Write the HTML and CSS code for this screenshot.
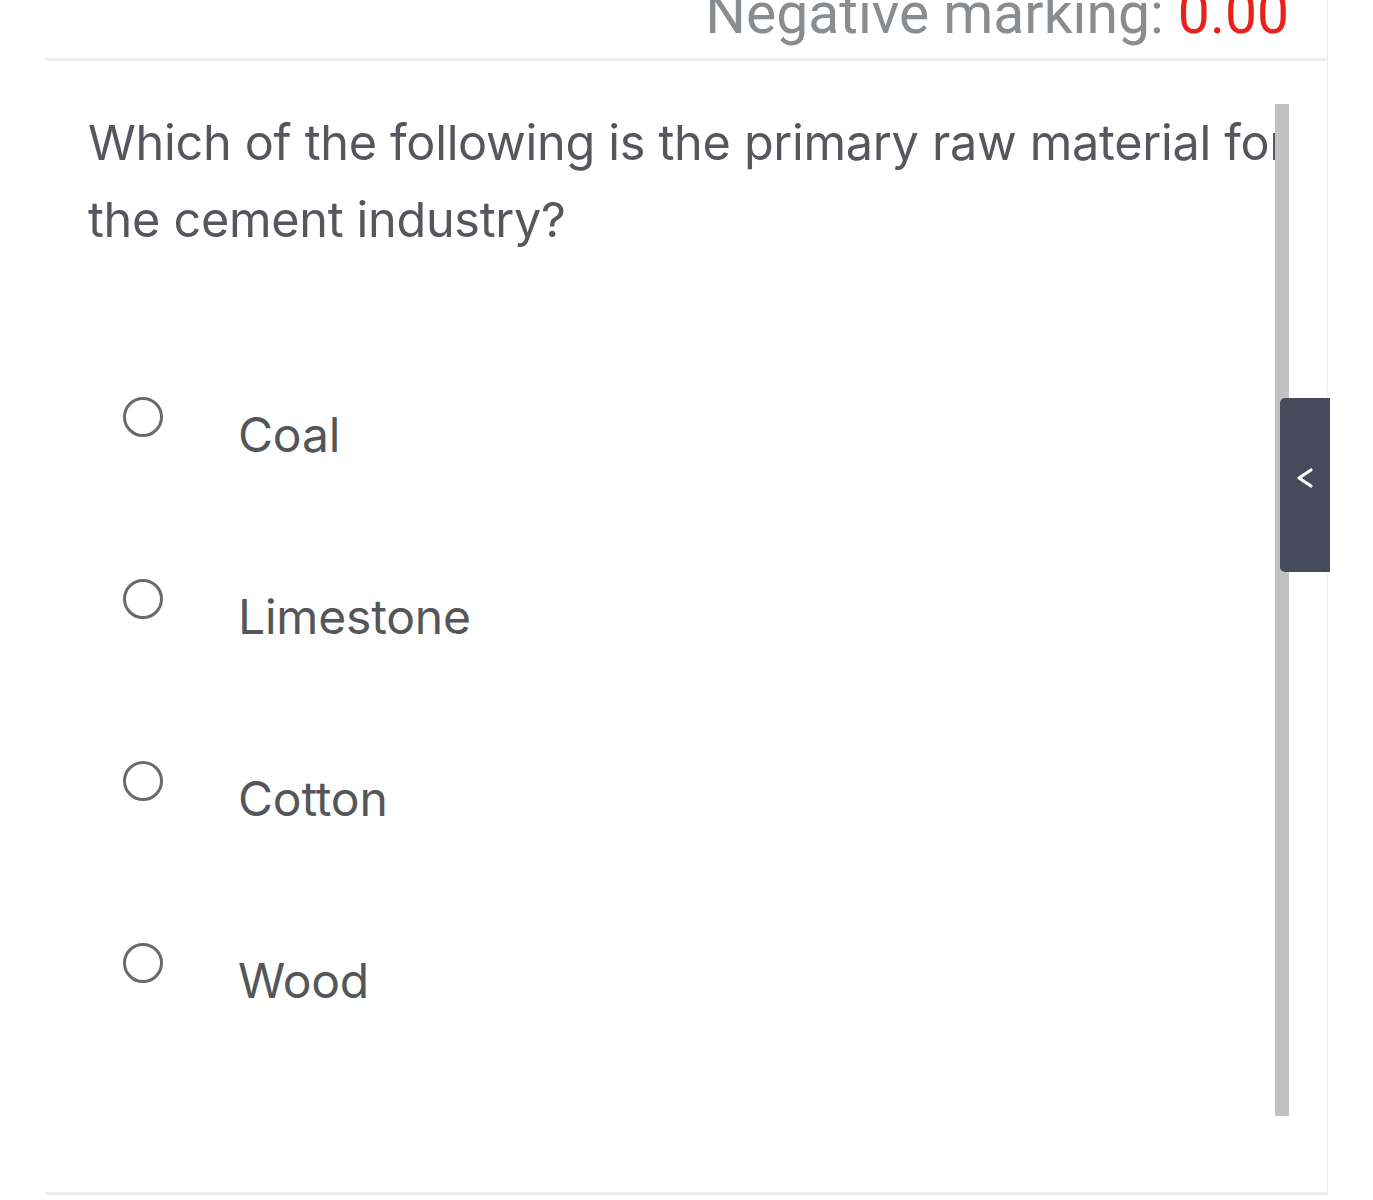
FILE: index.html
```html
<!DOCTYPE html>
<html>
<head>
<meta charset="utf-8">
<link rel="stylesheet" href="styles.css">
</head>
<body>
<div class="card">
  <div class="header">
    <span class="neg">Negative marking: <span class="neg-val">0.00</span></span>
  </div>
  <div class="content">
    <p class="question">Which of the following is the primary raw material for the cement industry?</p>
    <ul class="options">
      <li class="option"><span class="radio"></span><span class="label">Coal</span></li>
      <li class="option"><span class="radio"></span><span class="label">Limestone</span></li>
      <li class="option"><span class="radio"></span><span class="label">Cotton</span></li>
      <li class="option"><span class="radio"></span><span class="label">Wood</span></li>
    </ul>
    <div class="scrollbar"></div>
    <button class="tab" aria-label="Open panel">
      <svg class="chev" width="20" height="22" viewBox="0 0 20 22"><path d="M16 3 L4 11 L16 19" fill="none" stroke="#fff" stroke-width="3.2" stroke-linecap="round" stroke-linejoin="round"/></svg>
    </button>
  </div>
</div>
</body>
</html>
```
FILE: styles.css
```css
html, body {
  margin: 0;
  padding: 0;
  background: #ffffff;
}
body {
  height: 1200px;
  overflow: hidden;
}
.card {
  margin-left: 45px;
  width: 1282px;
  height: 1195px;
  border-right: 1px solid #eeeeee;
  box-sizing: content-box;
  display: flex;
  flex-direction: column;
}
.header {
  height: 58px;
  border-bottom: 3px solid #eeeeee;
  display: flex;
  justify-content: flex-end;
  align-items: flex-end;
  padding-right: 38px;
  overflow: hidden;
}
.neg {
  font-family: Roboto, "Liberation Sans", sans-serif;
  font-size: 57px;
  line-height: 57px;
  color: #8a8d90;
  margin-bottom: 16px;
  white-space: nowrap;
}
.neg-val {
  color: #e8221b;
}
.content {
  position: relative;
  flex: 1;
  border-bottom: 3px solid #eeeeee;
  padding-left: 43px;
}
.question {
  margin: 43px 0 0 0;
  width: 1240px;
  font-family: Inter, "Liberation Sans", sans-serif;
  font-size: 48.6px;
  line-height: 77px;
  color: #55575c;
  letter-spacing: -0.3px;
}
.options {
  list-style: none;
  margin: 139px 0 0 0;
  padding: 0 0 0 35px;
  display: flex;
  flex-direction: column;
  gap: 142px;
}
.option {
  display: flex;
  align-items: center;
  height: 40px;
}
.radio {
  width: 34px;
  height: 34px;
  border: 3px solid #6a6a6a;
  border-radius: 50%;
  flex: none;
}
.label {
  margin-left: 75px;
  font-family: Inter, "Liberation Sans", sans-serif;
  font-size: 48px;
  color: #545659;
  letter-spacing: -0.2px;
  position: relative;
  top: 17px;
}
.scrollbar {
  position: absolute;
  left: 1230px;
  top: 43px;
  width: 14px;
  height: 1012px;
  background: #c2c2c2;
}
.tab {
  position: absolute;
  left: 1235px;
  top: 337px;
  width: 50px;
  height: 174px;
  border: none;
  border-radius: 5px 0 0 5px;
  background: #454b5b;
  display: flex;
  align-items: center;
  justify-content: center;
  padding: 0;
}
.chev {
  position: relative;
  top: -7px;
}
```
